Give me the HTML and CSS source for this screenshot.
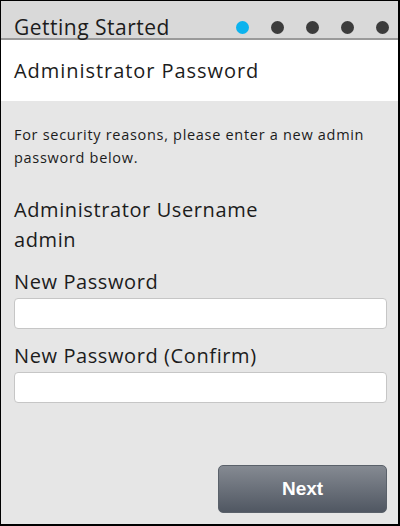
FILE: index.html
```html
<!DOCTYPE html>
<html>
<head>
<meta charset="utf-8">
<link rel="stylesheet" href="styles.css">
</head>
<body>
<div class="frame">
  <header class="topbar">
    <h1 class="topbar-title">Getting Started</h1>
    <div class="steps">
      <span class="dot dot-active"></span>
      <span class="dot"></span>
      <span class="dot"></span>
      <span class="dot"></span>
      <span class="dot"></span>
    </div>
  </header>
  <section class="page-head">
    <h2 class="page-title">Administrator Password</h2>
  </section>
  <main class="content">
    <p class="intro">For security reasons, please enter a new admin password below.</p>
    <div class="field-static">
      <div class="label-lg">Administrator Username</div>
      <div class="value-lg">admin</div>
    </div>
    <label class="field">
      <span class="label-lg">New Password</span>
      <input class="text-input" type="password">
    </label>
    <label class="field">
      <span class="label-lg">New Password (Confirm)</span>
      <input class="text-input" type="password">
    </label>
    <div class="actions">
      <button class="btn-next" type="button">Next</button>
    </div>
  </main>
</div>
</body>
</html>
```
FILE: styles.css
```css
html, body {
  margin: 0;
  padding: 0;
}
body {
  width: 400px;
  height: 526px;
  font-family: "Open Sans", "Noto Sans", sans-serif;
  color: #1c1c1c;
}
.frame {
  box-sizing: border-box;
  width: 400px;
  height: 526px;
  border-style: solid;
  border-color: #000;
  border-width: 1px 2px 2px 1px;
  background: #e6e6e6;
  display: flex;
  flex-direction: column;
}
.topbar {
  box-sizing: border-box;
  height: 39px;
  background: #d9d9d9;
  border-bottom: 2px solid #9a9a9a;
  display: flex;
  align-items: flex-end;
  justify-content: space-between;
  padding: 0 9px 0 13px;
}
.topbar-title {
  margin: 0;
  font-size: 21px;
  font-weight: 400;
  line-height: 24px;
  letter-spacing: 0.5px;
  align-self: flex-start;
  padding-top: 14px;
}
.steps {
  display: flex;
  gap: 22px;
  margin-bottom: 4px;
}
.dot {
  width: 13px;
  height: 13px;
  border-radius: 50%;
  background: #3c3c3c;
}
.dot-active {
  background: #0cb3ee;
}
.page-head {
  background: #fff;
  height: 61px;
  box-sizing: border-box;
  padding: 18px 13px 0;
}
.page-title {
  margin: 0;
  font-size: 20px;
  font-weight: 400;
  line-height: 26px;
  letter-spacing: 0.95px;
}
.content {
  flex: 1;
  display: flex;
  flex-direction: column;
  padding: 0 11px 0 13px;
}
.intro {
  margin: 23px 0 0;
  font-size: 14.5px;
  line-height: 22.5px;
  letter-spacing: 0.7px;
}
.field-static {
  margin-top: 26px;
}
.label-lg, .value-lg {
  display: block;
  font-size: 20px;
  line-height: 29px;
  letter-spacing: 0.6px;
}
.value-lg {
  margin-top: 1px;
}
.field {
  display: flex;
  flex-direction: column;
}
.field:first-of-type {
  margin-top: 15px;
}
.field + .field {
  margin-top: 14px;
}
.field .label-lg {
  line-height: 26px;
  margin-bottom: 3px;
}
.text-input {
  box-sizing: border-box;
  height: 31px;
  margin: 0;
  border: 1px solid #c6c6c6;
  border-radius: 4px;
  background: #fff;
  font-size: 16px;
}
.actions {
  margin-top: auto;
  display: flex;
  justify-content: flex-end;
  padding-bottom: 11px;
}
.btn-next {
  width: 169px;
  height: 48px;
  border: 1px solid #5a616a;
  border-radius: 5px;
  background: linear-gradient(#858a92, #505762);
  color: #fff;
  font-family: "Liberation Sans", Arial, sans-serif;
  font-weight: 700;
  font-size: 19px;
}
```
